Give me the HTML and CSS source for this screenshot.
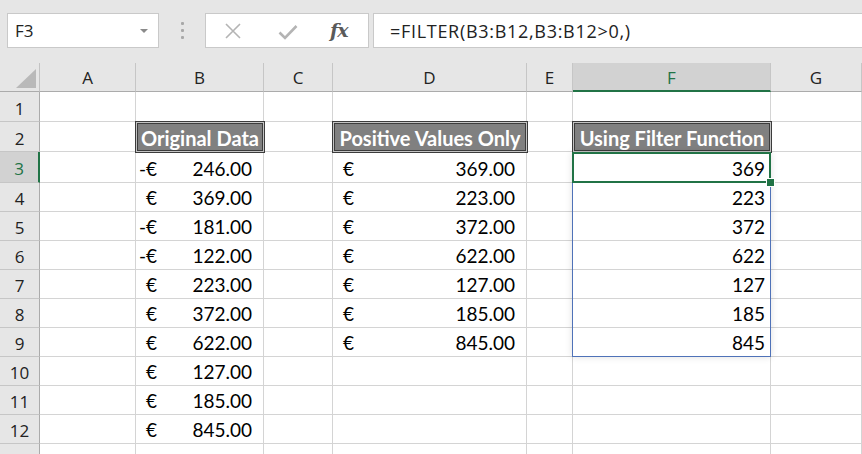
FILE: index.html
```html
<!DOCTYPE html>
<html>
<head>
<meta charset="utf-8">
<link rel="stylesheet" href="styles.css">
</head>
<body>
<div class="app">
  <div class="topbar">
    <div class="namebox"><span class="nb-text">F3</span><span class="nb-arrow"></span></div>
    <div class="dots"><i></i><i></i><i></i></div>
    <div class="fxbox">
      <svg class="ico-x" width="18" height="18" viewBox="0 0 18 18"><path d="M2 2 L16 16 M16 2 L2 16" stroke="#b4b4b4" stroke-width="1.6" fill="none"/></svg>
      <svg class="ico-check" width="20" height="16" viewBox="0 0 20 16"><path d="M1.5 8.5 L7 14 L18.5 2" stroke="#b4b4b4" stroke-width="2.6" fill="none"/></svg>
      <span class="ico-fx">fx</span>
    </div>
    <div class="formula">=FILTER(B3:B12,B3:B12&gt;0,)</div>
  </div>
  <div class="grid">
    <div class="corner"><svg width="20" height="19" viewBox="0 0 20 19"><polygon points="20,0 20,19 0,19" fill="#b9b9b9"/></svg></div>
    <div class="ch">A</div><div class="ch">B</div><div class="ch">C</div><div class="ch">D</div><div class="ch">E</div><div class="ch sel">F</div><div class="ch">G</div>

    <div class="rh">1</div><div class="c"></div><div class="c"></div><div class="c"></div><div class="c"></div><div class="c"></div><div class="c"></div><div class="c"></div>

    <div class="rh">2</div><div class="c"></div><div class="c hdr">Original Data</div><div class="c"></div><div class="c hdr">Positive Values Only</div><div class="c"></div><div class="c hdr">Using Filter Function</div><div class="c"></div>

    <div class="rh sel">3</div><div class="c"></div><div class="c acc"><span class="cur">-€</span><span>246.00</span></div><div class="c"></div><div class="c acc"><span class="cur">€</span><span>369.00</span></div><div class="c"></div><div class="c num">369</div><div class="c"></div>

    <div class="rh">4</div><div class="c"></div><div class="c acc"><span class="cur">€</span><span>369.00</span></div><div class="c"></div><div class="c acc"><span class="cur">€</span><span>223.00</span></div><div class="c"></div><div class="c num">223</div><div class="c"></div>

    <div class="rh">5</div><div class="c"></div><div class="c acc"><span class="cur">-€</span><span>181.00</span></div><div class="c"></div><div class="c acc"><span class="cur">€</span><span>372.00</span></div><div class="c"></div><div class="c num">372</div><div class="c"></div>

    <div class="rh">6</div><div class="c"></div><div class="c acc"><span class="cur">-€</span><span>122.00</span></div><div class="c"></div><div class="c acc"><span class="cur">€</span><span>622.00</span></div><div class="c"></div><div class="c num">622</div><div class="c"></div>

    <div class="rh">7</div><div class="c"></div><div class="c acc"><span class="cur">€</span><span>223.00</span></div><div class="c"></div><div class="c acc"><span class="cur">€</span><span>127.00</span></div><div class="c"></div><div class="c num">127</div><div class="c"></div>

    <div class="rh">8</div><div class="c"></div><div class="c acc"><span class="cur">€</span><span>372.00</span></div><div class="c"></div><div class="c acc"><span class="cur">€</span><span>185.00</span></div><div class="c"></div><div class="c num">185</div><div class="c"></div>

    <div class="rh">9</div><div class="c"></div><div class="c acc"><span class="cur">€</span><span>622.00</span></div><div class="c"></div><div class="c acc"><span class="cur">€</span><span>845.00</span></div><div class="c"></div><div class="c num">845</div><div class="c"></div>

    <div class="rh">10</div><div class="c"></div><div class="c acc"><span class="cur">€</span><span>127.00</span></div><div class="c"></div><div class="c"></div><div class="c"></div><div class="c"></div><div class="c"></div>

    <div class="rh">11</div><div class="c"></div><div class="c acc"><span class="cur">€</span><span>185.00</span></div><div class="c"></div><div class="c"></div><div class="c"></div><div class="c"></div><div class="c"></div>

    <div class="rh">12</div><div class="c"></div><div class="c acc"><span class="cur">€</span><span>845.00</span></div><div class="c"></div><div class="c"></div><div class="c"></div><div class="c"></div><div class="c"></div>

    <div class="rh">13</div><div class="c"></div><div class="c"></div><div class="c"></div><div class="c"></div><div class="c"></div><div class="c"></div><div class="c"></div>

    <div class="spill"></div>
    <div class="active"><span class="handle"></span></div>
  </div>
</div>
</body>
</html>
```

FILE: styles.css
```css
* { box-sizing: border-box; }
html, body { margin: 0; padding: 0; }
body {
  width: 862px;
  height: 454px;
  overflow: hidden;
  background: #e6e6e6;
  font-family: "Open Sans", "Noto Sans", sans-serif;
  color: #222;
}
.app { display: flex; flex-direction: column; }

/* ---------- formula bar ---------- */
.topbar {
  height: 63px;
  display: flex;
  align-items: flex-start;
  padding: 13px 0 0 7px;
}
.namebox {
  width: 152px;
  height: 35px;
  background: #fff;
  border: 1px solid #c9c9c9;
  display: flex;
  align-items: center;
  justify-content: space-between;
  padding: 0 10px 0 7px;
}
.nb-text { font-size: 17px; color: #222; }
.nb-arrow {
  width: 0; height: 0;
  border-left: 4px solid transparent;
  border-right: 4px solid transparent;
  border-top: 4px solid #8a8a8a;
}
.dots {
  width: 46px;
  height: 35px;
  display: flex;
  flex-direction: column;
  align-items: center;
  justify-content: center;
  gap: 4px;
}
.dots i { display: block; width: 3px; height: 3px; background: #a8a8a8; border-radius: 1px; }
.fxbox {
  width: 164px;
  height: 35px;
  background: #fff;
  border: 1px solid #c9c9c9;
  display: flex;
  align-items: center;
  padding-left: 18px;
}
.ico-x { margin-right: 36px; }
.ico-check { margin-right: 32px; margin-top: 2px; }
.ico-fx {
  font-family: "DejaVu Serif", "Liberation Serif", serif;
  font-style: italic;
  font-weight: bold;
  font-size: 19px;
  color: #5a5a5a;
  letter-spacing: -1px;
  margin-top: -2px;
}
.formula {
  flex: 1;
  margin-left: 4px;
  margin-right: -10px;
  height: 35px;
  background: #fff;
  border: 1px solid #c9c9c9;
  display: flex;
  align-items: center;
  padding-left: 16px;
  font-size: 18px;
  letter-spacing: 0.7px;
  color: #222;
}

/* ---------- sheet grid ---------- */
.grid {
  position: relative;
  display: grid;
  grid-template-columns: 40px 96px 128px 69px 194px 46px 198px 91px;
  grid-template-rows: 29px 30px 30px 31px repeat(9, 29px) 29px;
  background: #fff;
  height: 391px;
  overflow: hidden;
}
.corner {
  background: #e6e6e6;
  border-right: 1px solid #c3c3c3;
  border-bottom: 1px solid #ababab;
  display: flex;
  align-items: flex-end;
  justify-content: flex-end;
  padding: 0 3px 3px 0;
}
.corner svg { display: block; }
.ch {
  background: #e6e6e6;
  border-right: 1px solid #c6c6c6;
  border-bottom: 1px solid #ababab;
  display: flex;
  align-items: center;
  justify-content: center;
  font-size: 17px;
  color: #222;
  padding-top: 1px;
}
.ch.sel {
  background: #d2d2d2;
  border-bottom: 2px solid #217346;
  color: #217346;
}
.rh {
  background: #e6e6e6;
  border-right: 1px solid #ababab;
  border-bottom: 1px solid #c6c6c6;
  display: flex;
  align-items: center;
  justify-content: center;
  font-size: 17px;
  color: #222;
  padding-top: 3px;
}
.rh.sel {
  background: #d2d2d2;
  border-right: 2px solid #217346;
  color: #217346;
}
.c {
  border-right: 1px solid #d4d4d4;
  border-bottom: 1px solid #d4d4d4;
  font-family: Lato, "Open Sans", sans-serif;
  font-size: 19px;
  color: #000;
  line-height: 20px;
  display: flex;
  align-items: flex-end;
  padding-bottom: 3px;
}
.hdr {
  position: relative;
  z-index: 1;
  margin: -1px;
  background: #808080;
  border: 1px solid #3c3c3c;
  box-shadow: inset 0 0 0 1px #c4c4c4, inset 0 0 0 2px #3c3c3c;
  color: #fff;
  font-size: 20px;
  font-weight: bold;
  justify-content: center;
  padding-bottom: 4px;
  white-space: nowrap;
}
.acc {
  justify-content: space-between;
  padding-right: 11px;
}
.acc .cur {
  width: 21px;
  text-align: right;
}
.num {
  justify-content: flex-end;
  padding-right: 5px;
}

/* ---------- selection overlays ---------- */
.spill {
  position: absolute;
  grid-column: 7 / 8;
  grid-row: 4 / 11;
  left: -1px;
  right: 0;
  top: 0;
  bottom: 0;
  border: 1px solid #4f72b8;
  box-shadow: 0 0 7px rgba(0, 0, 0, 0.13);
  z-index: 2;
}
.active {
  position: absolute;
  grid-column: 7 / 8;
  grid-row: 4 / 5;
  left: -1px;
  right: 0;
  top: 0;
  bottom: 0;
  border: 2px solid #217346;
  z-index: 3;
}
.handle {
  position: absolute;
  right: -5px;
  bottom: -5px;
  width: 7px;
  height: 7px;
  background: #217346;
  box-shadow: 0 0 0 1px #fff;
}
```
